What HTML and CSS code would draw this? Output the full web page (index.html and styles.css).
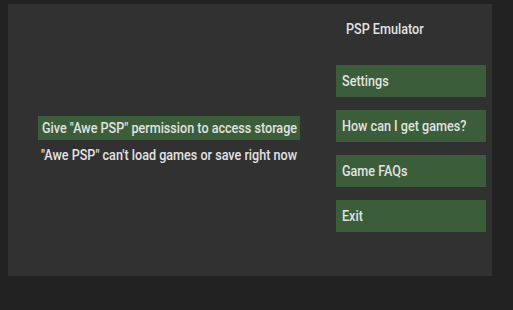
FILE: index.html
```html
<!DOCTYPE html>
<html>
<head>
  <meta charset="utf-8">
  <title>PSP Emulator</title>
  <link rel="stylesheet" href="styles.css">
</head>
<body>
  <div class="panel">
    <!-- mensaje de permisos -->
    <div class="left">
      <div class="grant"><span class="txt">Give "Awe PSP" permission to access storage</span></div>
      <div class="notice"><span class="txt">"Awe PSP" can't load games or save right now</span></div>
    </div>
    <!-- menu principal -->
    <div class="menu">
      <div class="title"><span class="txt">PSP Emulator</span></div>
      <div class="btn"><span class="txt">Settings</span></div>
      <div class="btn"><span class="txt">How can I get games?</span></div>
      <div class="btn"><span class="txt">Game FAQs</span></div>
      <div class="btn"><span class="txt">Exit</span></div>
    </div>
  </div>
</body>
</html>
```

FILE: styles.css
```css
* {
  box-sizing: border-box;
}

body {
  margin: 0;
  padding: 0;
  background: #222222;
  font-family: Roboto, sans-serif;
  font-weight: 500;
  color: #e2e2e2;
}

.panel {
  margin: 4px 0 0 8px;
  width: 484px;
  height: 272px;
  background: #313131;
  display: flex;
}

/* texto estrecho, como Roboto Condensed */
.txt {
  display: inline-block;
  white-space: nowrap;
  transform: scaleX(0.84);
  transform-origin: left center;
}

.left {
  width: 328px;
  padding: 112px 0 0 30px;
}

.grant {
  width: 262px;
  height: 24px;
  line-height: 24px;
  padding: 0 4px;
  background: #3b5d39;
  font-size: 15px;
}

.notice {
  margin-top: 6px;
  padding-left: 3px;
  font-size: 15px;
  line-height: 18px;
}

.menu {
  width: 150px;
  padding-top: 15px;
}

.title {
  padding-left: 10px;
  font-size: 15px;
  line-height: 20px;
  height: 46px;
}

.btn {
  height: 32px;
  line-height: 32px;
  margin-bottom: 13px;
  padding-left: 6px;
  background: #3b5d39;
  font-size: 15px;
}
```
